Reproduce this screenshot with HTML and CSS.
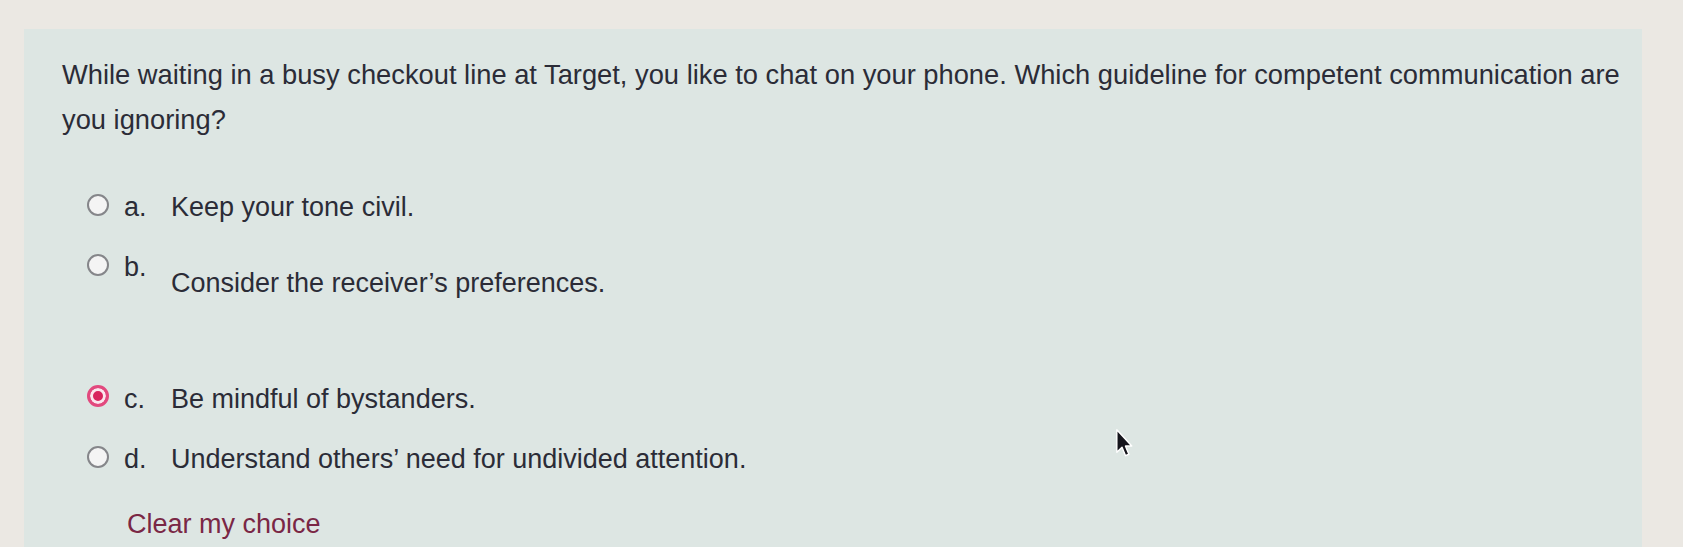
FILE: index.html
```html
<!DOCTYPE html>
<html lang="en">
<head>
<meta charset="utf-8">
<title>Question</title>
<link rel="stylesheet" href="styles.css">
</head>
<body>
<div class="page">
  <div class="panel">
    <div class="qtext">While waiting in a busy checkout line at Target, you like to chat on your phone. Which guideline for competent communication are you ignoring?</div>
    <div class="answers">
      <div class="opt">
        <span class="radio"></span>
        <span class="num">a.</span>
        <span class="ans">Keep your tone civil.</span>
      </div>
      <div class="opt opt-b">
        <span class="radio"></span>
        <span class="num">b.</span>
        <span class="ans ans-low">Consider the receiver’s preferences.</span>
      </div>
      <div class="opt">
        <span class="radio checked"></span>
        <span class="num">c.</span>
        <span class="ans">Be mindful of bystanders.</span>
      </div>
      <div class="opt">
        <span class="radio"></span>
        <span class="num">d.</span>
        <span class="ans">Understand others’ need for undivided attention.</span>
      </div>
    </div>
    <div class="clear">Clear my choice</div>
  </div>
  <svg class="cursor" width="18" height="31" viewBox="0 0 16 28">
    <path d="M1.5 1.5 L1.5 22 L6.2 17.4 L9.4 25 L12.4 23.7 L9.3 16.3 L15 16.3 Z" fill="#15151c" stroke="#ffffff" stroke-width="1.3" stroke-linejoin="round"/>
  </svg>
</div>
</body>
</html>
```

FILE: styles.css
```css
html, body {
  margin: 0;
  padding: 0;
}
body {
  background: #ebe8e3;
  font-family: "Liberation Sans", Arial, sans-serif;
  color: #2b2c37;
  overflow: hidden;
}
.page {
  position: relative;
  width: 1683px;
  height: 547px;
  padding-top: 29px;
  padding-left: 24px;
  box-sizing: border-box;
  overflow: hidden;
}
.panel {
  width: 1618px;
  height: 518px;
  background: #dde6e3;
  box-sizing: border-box;
  padding: 23px 8px 0 38px;
}
.qtext {
  font-size: 27.3px;
  line-height: 45px;
}
.answers {
  margin-top: 50px;
  padding-left: 25px;
  display: flex;
  flex-direction: column;
  gap: 30px;
}
.opt {
  display: flex;
  align-items: flex-start;
  font-size: 27px;
  line-height: 30px;
}
.opt-b {
  margin-bottom: 56px;
}
.radio {
  flex: none;
  width: 18px;
  height: 18px;
  border: 2px solid #85868a;
  border-radius: 50%;
  background: #f4f4f4;
  margin-top: 2px;
  margin-right: 15px;
}
.radio.checked {
  width: 16px;
  height: 16px;
  border: 3px solid #e2497e;
  background: #d8245e;
  box-shadow: inset 0 0 0 3px #fbe6ee;
  margin-top: 1px;
  margin-right: 15px;
}
.num {
  flex: none;
  width: 47px;
}
.ans-low {
  padding-top: 16px;
}
.clear {
  margin-top: 35px;
  padding-left: 65px;
  font-size: 27px;
  line-height: 30px;
  color: #7a2745;
}
.cursor {
  position: absolute;
  left: 1115px;
  top: 428px;
}
```
